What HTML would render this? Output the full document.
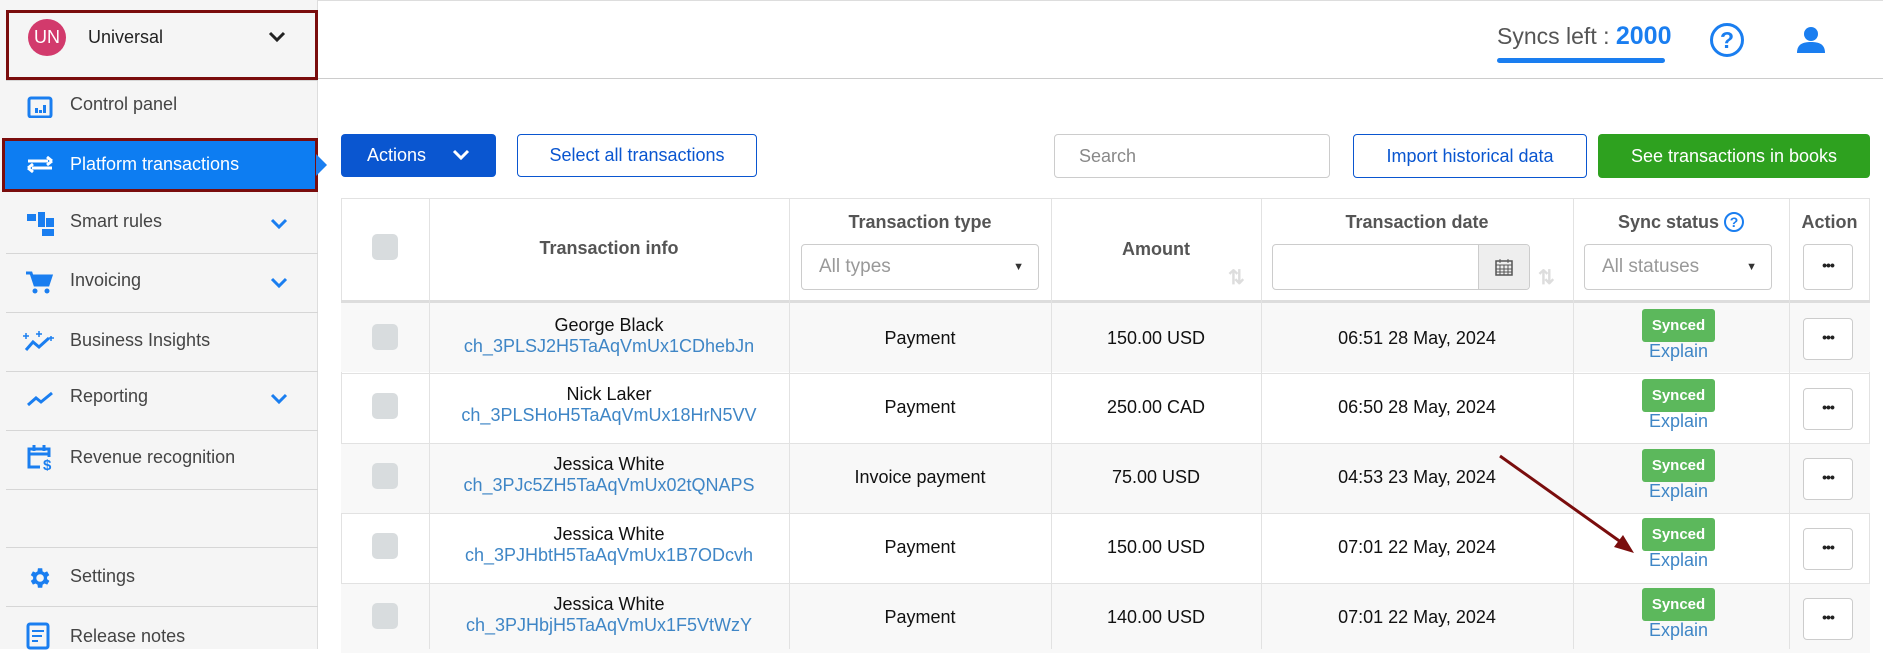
<!DOCTYPE html>
<html><head><meta charset="utf-8"><style>
*{box-sizing:border-box;margin:0;padding:0}
body{width:1883px;height:649px;overflow:hidden;background:#fff;font-family:"Liberation Sans",sans-serif;position:relative;color:#222}
.a{position:absolute}
.side{left:0;top:0;width:318px;height:649px;background:#f5f5f5;border-right:1px solid #ddd}
.item{position:absolute;left:0;width:318px;font-size:18px;color:#444}
.item .t{position:absolute;left:70px}
.sep{position:absolute;left:6px;width:312px;height:1px;background:#d6d6d6}
.chev{position:absolute;left:270px}
.btn{position:absolute;border-radius:4px;font-size:18px;text-align:center}
.hd{font-weight:bold;color:#555;font-size:18px;text-align:center;position:absolute}
.vl{position:absolute;top:198px;height:451px;width:1px;background:#e2e2e2}
.hl{position:absolute;left:341px;width:1529px;height:1px;background:#e2e2e2}
.cb{position:absolute;left:372px;width:26px;height:26px;border-radius:5px;background:#d8dcde}
.c{position:absolute;text-align:center;font-size:18px;color:#111}
.link{color:#3f86c6}
.syn{position:absolute;left:1642px;width:73px;height:33px;background:#5cb85c;border-radius:3px;color:#fff;font-weight:bold;font-size:15px;text-align:center;line-height:33px}
.exp{position:absolute;left:1642px;width:73px;text-align:center;color:#3f86c6;font-size:18px}
.dots{position:absolute;left:1803px;width:50px;height:42px;border:1px solid #ccc;border-radius:4px;background:#fff;text-align:center;line-height:36px;font-weight:bold;font-size:14px;letter-spacing:-1px}
.sel{position:absolute;border:1px solid #ccc;border-radius:4px;background:#fff;font-size:19px;color:#999}
</style></head><body>
<div class="a side"></div>
<div class="a" style="left:318px;top:0;width:1565px;height:1px;background:#ddd"></div>
<div class="a" style="left:318px;top:78px;width:1565px;height:1px;background:#ccc"></div>
<div class="a" style="left:6px;top:10px;width:312px;height:70px;border:3px solid #7a0d0d"></div>
<div class="a" style="left:28px;top:19px;width:38px;height:37px;border-radius:50%;background:#d23a6c;color:#fff;font-size:18px;text-align:center;line-height:37px">UN</div>
<div class="a" style="left:88px;top:27px;font-size:18px;color:#222">Universal</div>
<svg class="a" style="left:268px;top:31px" width="18" height="12"><path d="M2 2l7 7 7-7" stroke="#222" stroke-width="3" fill="none"/></svg>
<div class="sep" style="top:80px"></div>
<div class="item" style="top:94px"><svg class="a" style="left:27px;top:2px" width="26" height="22"><rect x="2" y="2" width="22" height="19" rx="2" fill="none" stroke="#1a7ef0" stroke-width="3"/><rect x="8" y="12" width="3" height="5" fill="#1a7ef0"/><rect x="12" y="14" width="3" height="3" fill="#1a7ef0"/><rect x="16" y="9" width="3" height="8" fill="#1a7ef0"/></svg><span class="t">Control panel</span></div>
<div class="a" style="left:2px;top:138px;width:316px;height:54px;background:#0d7df2;border:3px solid #7a0d0d"></div>
<div class="a" style="left:316px;top:154px;width:0;height:0;border-top:11px solid transparent;border-bottom:11px solid transparent;border-left:11px solid #1a7ef0"></div>
<div class="item" style="top:154px;color:#fff"><svg class="a" style="left:26px;top:2px" width="28" height="18"><path d="M6 12h20M2 12l5-4M2 12l5 4M2 5h20M26 5l-5-4M26 5l-5 4" stroke="#fff" stroke-width="3" fill="none"/></svg><span class="t">Platform transactions</span></div>
<div class="item" style="top:211px"><svg class="a" style="left:26px;top:0" width="30" height="26"><rect x="1" y="3" width="9" height="7" fill="#1a7ef0"/><rect x="12" y="1" width="7" height="15" fill="#1a7ef0"/><rect x="20" y="7" width="8" height="9" fill="#1a7ef0"/><rect x="16" y="18" width="12" height="7" fill="#1a7ef0"/></svg><span class="t">Smart rules</span></div>
<svg class="chev" style="top:218px" width="18" height="12"><path d="M2 2l7 7 7-7" stroke="#1a7ef0" stroke-width="3" fill="none"/></svg>
<div class="sep" style="top:253px"></div>
<div class="item" style="top:270px"><svg class="a" style="left:24px;top:0" width="30" height="24"><path d="M2 3h5l4 12h13l3-9H9" stroke="#1a7ef0" stroke-width="3" fill="#1a7ef0"/><circle cx="11" cy="21" r="2.5" fill="#1a7ef0"/><circle cx="23" cy="21" r="2.5" fill="#1a7ef0"/></svg><span class="t">Invoicing</span></div>
<svg class="chev" style="top:277px" width="18" height="12"><path d="M2 2l7 7 7-7" stroke="#1a7ef0" stroke-width="3" fill="none"/></svg>
<div class="sep" style="top:312px"></div>
<div class="item" style="top:330px"><svg class="a" style="left:22px;top:0" width="34" height="24"><path d="M4 20l7-8 6 5 10-9" stroke="#1a7ef0" stroke-width="3" fill="none"/><path d="M4 3v6M1 6h6M17 1v6M14 4h6M29 6v5M27 8h5" stroke="#1a7ef0" stroke-width="1.5"/></svg><span class="t">Business Insights</span></div>
<div class="sep" style="top:371px"></div>
<div class="item" style="top:386px"><svg class="a" style="left:26px;top:4px" width="28" height="18"><path d="M2 15l8-7 5 4 11-9" stroke="#1a7ef0" stroke-width="3" fill="none"/></svg><span class="t">Reporting</span></div>
<svg class="chev" style="top:393px" width="18" height="12"><path d="M2 2l7 7 7-7" stroke="#1a7ef0" stroke-width="3" fill="none"/></svg>
<div class="sep" style="top:430px"></div>
<div class="item" style="top:447px"><svg class="a" style="left:26px;top:-4px" width="28" height="28"><path d="M14 24H3V6h20v8M3 11h20M8 2v6M18 2v6" stroke="#1a7ef0" stroke-width="3" fill="none"/><text x="17" y="27" font-size="15" font-weight="bold" fill="#1a7ef0" font-family="Liberation Sans">$</text></svg><span class="t">Revenue recognition</span></div>
<div class="sep" style="top:489px"></div>
<div class="sep" style="top:547px"></div>
<div class="item" style="top:566px"><svg class="a" style="left:26px;top:-1px" width="26" height="26" viewBox="0 0 24 24"><path fill="#1a7ef0" d="M19.4 13a7.5 7.5 0 000-2l2.1-1.6-2-3.5-2.5 1a7 7 0 00-1.7-1L15 3h-4l-.4 2.9a7 7 0 00-1.7 1l-2.5-1-2 3.5L6.6 11a7.5 7.5 0 000 2l-2.2 1.6 2 3.5 2.5-1c.5.4 1.1.7 1.700 1L11 21h4l.4-2.9c.6-.3 1.2-.6 1.7-1l2.5 1 2-3.5zM13 15.5a3.5 3.5 0 110-7 3.5 3.5 0 010 7z"/></svg><span class="t">Settings</span></div>
<div class="sep" style="top:606px"></div>
<div class="item" style="top:626px"><svg class="a" style="left:26px;top:-4px" width="28" height="28"><rect x="2" y="2" width="20" height="24" rx="2" fill="none" stroke="#1a7ef0" stroke-width="3"/><path d="M6 9h12M6 14h10M6 19h6" stroke="#1a7ef0" stroke-width="2"/></svg><span class="t">Release notes</span></div>

<div class="a" style="left:1497px;top:22px;font-size:23px;color:#555">Syncs left : <b style="color:#1a7ef0;font-size:25px">2000</b></div>
<div class="a" style="left:1497px;top:58px;width:168px;height:5px;border-radius:3px;background:#1a7ef0"></div>
<svg class="a" style="left:1709px;top:22px" width="36" height="36"><circle cx="18" cy="18" r="15.5" fill="none" stroke="#1a7ef0" stroke-width="3"/><text x="18" y="26" text-anchor="middle" font-size="23" font-weight="bold" fill="#1a7ef0" font-family="Liberation Sans">?</text></svg>
<svg class="a" style="left:1796px;top:25px" width="30" height="30"><circle cx="15" cy="9" r="7" fill="#1a7ef0"/><path d="M1 28c0-9 6-11 14-11s14 2 14 11z" fill="#1a7ef0"/></svg>

<div class="btn" style="left:341px;top:134px;width:155px;height:43px;background:#0a56d0;color:#fff;line-height:43px;text-align:left;padding-left:26px">Actions<svg class="a" style="left:111px;top:15px" width="18" height="12"><path d="M2 2l7 7 7-7" stroke="#fff" stroke-width="3" fill="none"/></svg></div>
<div class="btn" style="left:517px;top:134px;width:240px;height:43px;border:1px solid #0a56d0;color:#0a56d0;line-height:41px">Select all transactions</div>
<div class="btn" style="left:1054px;top:134px;width:276px;height:44px;border:1px solid #ccc;color:#888;line-height:42px;text-align:left;padding-left:24px">Search</div>
<div class="btn" style="left:1353px;top:134px;width:234px;height:44px;border:1px solid #0a56d0;color:#0a56d0;line-height:42px">Import historical data</div>
<div class="btn" style="left:1598px;top:134px;width:272px;height:44px;background:#2ea11f;color:#fff;line-height:44px">See transactions in books</div>

<div class="a" style="left:341px;top:198px;width:1529px;height:451px;border:1px solid #e2e2e2;border-bottom:none"></div>
<div class="a" style="left:341px;top:302px;width:1529px;height:70px;background:#f8f8f8"></div>
<div class="a" style="left:341px;top:443px;width:1529px;height:70px;background:#f8f8f8"></div>
<div class="a" style="left:341px;top:583px;width:1529px;height:70px;background:#f8f8f8"></div>
<div class="a" style="left:341px;top:300px;width:1529px;height:3px;background:#ddd"></div>
<div class="hl" style="top:373px"></div><div class="hl" style="top:443px"></div><div class="hl" style="top:513px"></div><div class="hl" style="top:583px"></div>
<div class="vl" style="left:429px"></div><div class="vl" style="left:789px"></div><div class="vl" style="left:1051px"></div><div class="vl" style="left:1261px"></div><div class="vl" style="left:1573px"></div><div class="vl" style="left:1789px"></div>

<div class="cb" style="top:234px"></div>
<div class="hd" style="left:429px;width:360px;top:238px">Transaction info</div>
<div class="hd" style="left:789px;width:262px;top:212px">Transaction type</div>
<div class="sel" style="left:801px;top:244px;width:238px;height:46px;line-height:44px;padding-left:17px">All types<span style="position:absolute;right:14px;top:0;font-size:11px;color:#333">▼</span></div>
<div class="hd" style="left:1051px;width:210px;top:239px">Amount</div>
<div class="a" style="left:1228px;top:265px;color:#ddd;font-size:20px;font-weight:bold">⇅</div>
<div class="hd" style="left:1261px;width:312px;top:212px">Transaction date</div>
<div class="sel" style="left:1272px;top:244px;width:258px;height:46px;overflow:hidden"><div style="position:absolute;left:205px;top:0;width:53px;height:46px;background:#eee;border-left:1px solid #ccc"></div><svg style="position:absolute;left:222px;top:13px" width="18" height="18"><rect x="1" y="3" width="16" height="14" fill="none" stroke="#555" stroke-width="1.5"/><path d="M1 7h16M5 7v10M9 7v10M13 7v10M1 11h16M1 14h16M5 1v4M13 1v4" stroke="#555" stroke-width="1"/></svg></div>
<div class="a" style="left:1538px;top:265px;color:#ddd;font-size:20px;font-weight:bold">⇅</div>
<div class="hd" style="left:1573px;width:216px;top:212px">Sync status <span style="display:inline-block;width:20px;height:20px;border:2px solid #1a7ef0;border-radius:50%;color:#1a7ef0;font-size:14px;line-height:16px;vertical-align:1px">?</span></div>
<div class="sel" style="left:1584px;top:244px;width:188px;height:46px;line-height:44px;padding-left:17px">All statuses<span style="position:absolute;right:14px;top:0;font-size:11px;color:#333">▼</span></div>
<div class="hd" style="left:1789px;width:81px;top:212px;">Action</div>
<div class="dots" style="top:244px;height:46px;line-height:40px">•••</div>

<div class="cb" style="top:324px"></div>
<div class="c" style="left:429px;width:360px;top:315px">George Black<br><span class="link">ch_3PLSJ2H5TaAqVmUx1CDhebJn</span></div>
<div class="c" style="left:789px;width:262px;top:328px">Payment</div>
<div class="c" style="left:1051px;width:210px;top:328px">150.00 USD</div>
<div class="c" style="left:1261px;width:312px;top:328px">06:51 28 May, 2024</div>
<div class="syn" style="top:309px">Synced</div><div class="exp" style="top:341px">Explain</div>
<div class="dots" style="top:318px">•••</div>

<div class="cb" style="top:393px"></div>
<div class="c" style="left:429px;width:360px;top:384px">Nick Laker<br><span class="link">ch_3PLSHoH5TaAqVmUx18HrN5VV</span></div>
<div class="c" style="left:789px;width:262px;top:397px">Payment</div>
<div class="c" style="left:1051px;width:210px;top:397px">250.00 CAD</div>
<div class="c" style="left:1261px;width:312px;top:397px">06:50 28 May, 2024</div>
<div class="syn" style="top:379px">Synced</div><div class="exp" style="top:411px">Explain</div>
<div class="dots" style="top:388px">•••</div>

<div class="cb" style="top:463px"></div>
<div class="c" style="left:429px;width:360px;top:454px">Jessica White<br><span class="link">ch_3PJc5ZH5TaAqVmUx02tQNAPS</span></div>
<div class="c" style="left:789px;width:262px;top:467px">Invoice payment</div>
<div class="c" style="left:1051px;width:210px;top:467px">75.00 USD</div>
<div class="c" style="left:1261px;width:312px;top:467px">04:53 23 May, 2024</div>
<div class="syn" style="top:449px">Synced</div><div class="exp" style="top:481px">Explain</div>
<div class="dots" style="top:458px">•••</div>

<div class="cb" style="top:533px"></div>
<div class="c" style="left:429px;width:360px;top:524px">Jessica White<br><span class="link">ch_3PJHbtH5TaAqVmUx1B7ODcvh</span></div>
<div class="c" style="left:789px;width:262px;top:537px">Payment</div>
<div class="c" style="left:1051px;width:210px;top:537px">150.00 USD</div>
<div class="c" style="left:1261px;width:312px;top:537px">07:01 22 May, 2024</div>
<div class="syn" style="top:518px">Synced</div><div class="exp" style="top:550px">Explain</div>
<div class="dots" style="top:528px">•••</div>

<div class="cb" style="top:603px"></div>
<div class="c" style="left:429px;width:360px;top:594px">Jessica White<br><span class="link">ch_3PJHbjH5TaAqVmUx1F5VtWzY</span></div>
<div class="c" style="left:789px;width:262px;top:607px">Payment</div>
<div class="c" style="left:1051px;width:210px;top:607px">140.00 USD</div>
<div class="c" style="left:1261px;width:312px;top:607px">07:01 22 May, 2024</div>
<div class="syn" style="top:588px">Synced</div><div class="exp" style="top:620px">Explain</div>
<div class="dots" style="top:598px">•••</div>

<svg class="a" style="left:0;top:0" width="1883" height="649"><path d="M1500 456L1625 545" stroke="#7a0d0d" stroke-width="3"/><path d="M1634 553l-20-6 9-12z" fill="#7a0d0d"/></svg>
</body></html>
